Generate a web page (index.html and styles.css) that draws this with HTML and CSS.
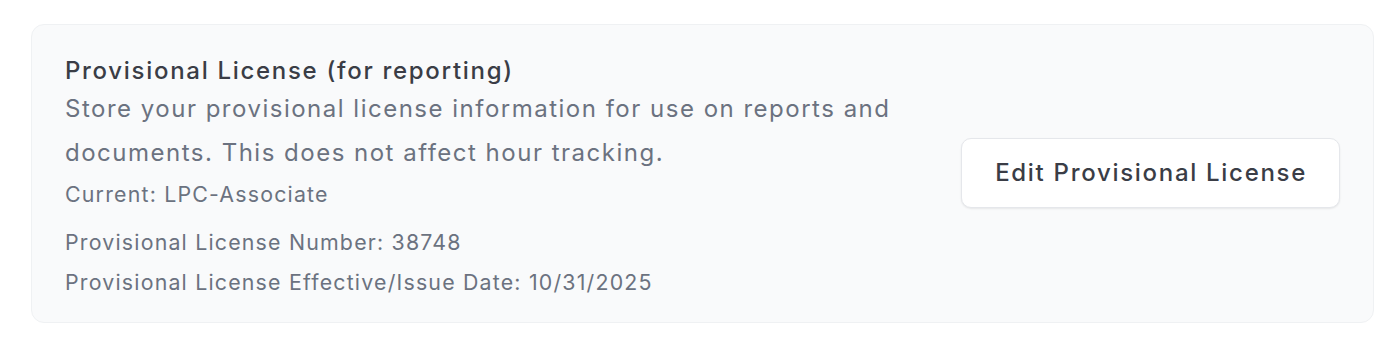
FILE: index.html
```html
<!DOCTYPE html>
<html lang="en">
<head>
    <meta charset="UTF-8">
    <meta name="viewport" content="width=device-width, initial-scale=1.0">
    <title>Provisional License</title>
    <link rel="stylesheet" href="styles.css">
</head>
<body>
    <div class="page">
        <div class="license-card">
            <div class="license-info">
                <h3 class="license-title">Provisional License (for reporting)</h3>
                <p class="license-desc">Store your provisional license information for use on reports and documents. This does not affect hour tracking.</p>
                <p class="license-current">Current: LPC-Associate</p>
                <div class="license-details">
                    <p>Provisional License Number: 38748</p>
                    <p>Provisional License Effective/Issue Date: 10/31/2025</p>
                </div>
            </div>
            <button class="edit-button">Edit Provisional License</button>
        </div>
    </div>
</body>
</html>
```

FILE: styles.css
```css
body {
    font-family: Inter, "Noto Sans", sans-serif;
    background-color: #fff;
    margin: 0;
    padding: 0;
}

.page {
    padding: 24px 24px 24px 31px;
}

.license-card {
    display: flex;
    align-items: center;
    justify-content: space-between;
    gap: 24px;
    background-color: #f9fafb;
    border: 1px solid #eff1f3;
    border-radius: 13px;
    padding: 30px 33px 24px 33px;
}

.license-info {
    max-width: 896px;
}

.license-title {
    margin: 0;
    font-size: 24px;
    line-height: 32px;
    font-weight: 450;
    letter-spacing: 1.7px;
    color: #3a3d46;
}

.license-desc {
    margin: 0;
    font-size: 24px;
    line-height: 44px;
    letter-spacing: 1.5px;
    color: #6b7280;
}

.license-current,
.license-details p {
    font-size: 21.33px;
    line-height: 32px;
    letter-spacing: 1.2px;
    color: #6b7280;
}

.license-current {
    margin: 3px 0 0;
}

.license-details {
    margin-top: 16px;
}

.license-details p {
    margin: 0 0 8px;
}

.license-details p:last-child {
    margin-bottom: 0;
}

.edit-button {
    font-family: inherit;
    font-size: 24px;
    line-height: 32px;
    font-weight: 450;
    letter-spacing: 1.7px;
    color: #3a3d46;
    background-color: #fff;
    border: 1px solid #e5e7eb;
    border-radius: 10px;
    padding: 18px 32px 18px 33px;
    margin-bottom: 7px;
    box-shadow: 0 1px 2px rgba(0, 0, 0, 0.08);
    cursor: pointer;
    white-space: nowrap;
}
```
